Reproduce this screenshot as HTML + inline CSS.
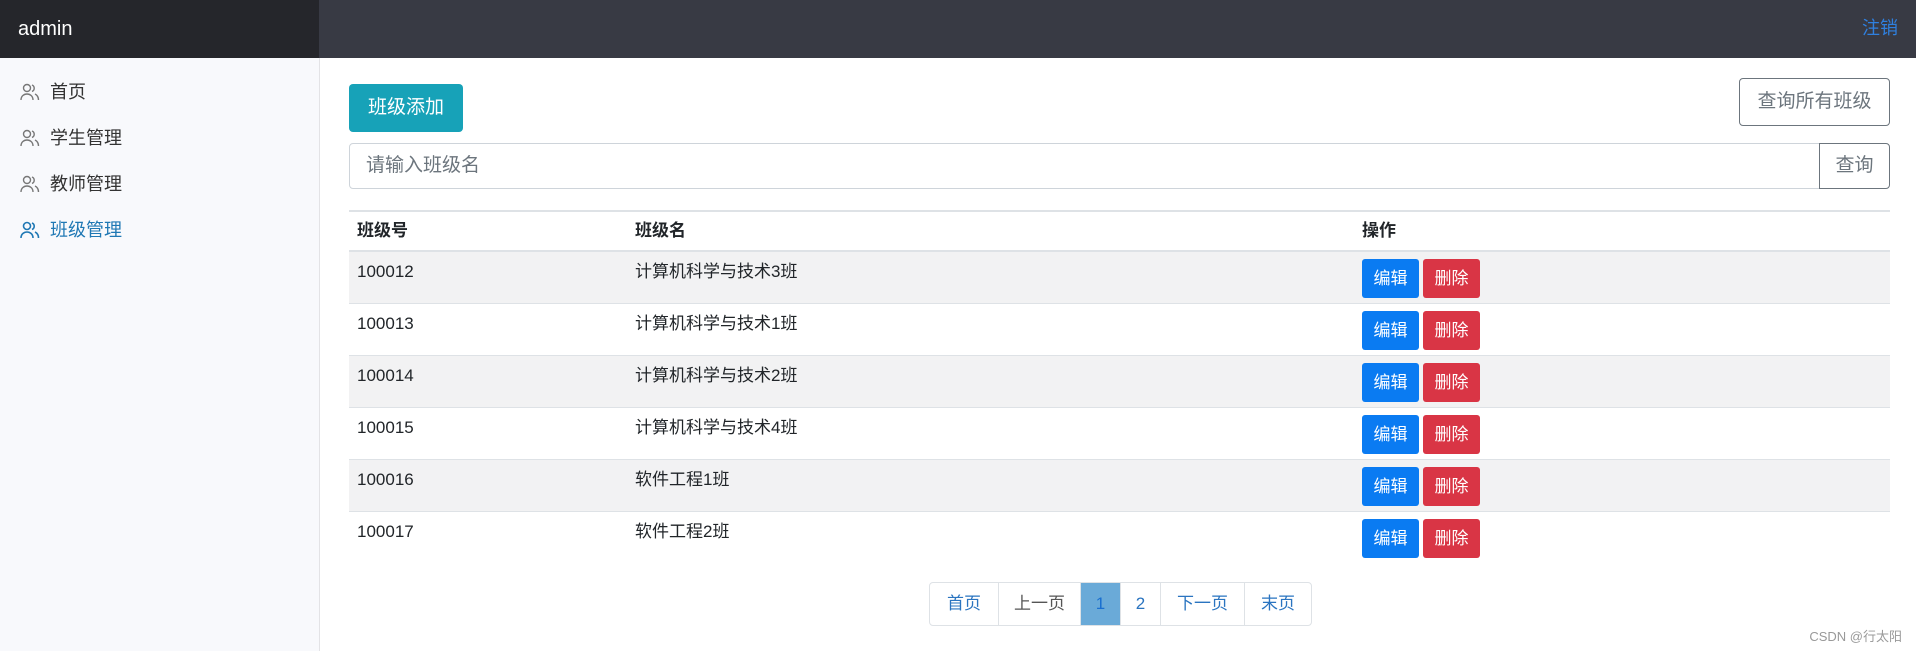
<!DOCTYPE html>
<html><head><meta charset="utf-8"><style>
*{box-sizing:border-box;margin:0;padding:0}
body{width:1916px;height:651px;overflow:hidden;background:#fff;font-family:"Liberation Sans","Noto Sans CJK SC",sans-serif;color:#212529;position:relative}
.hd{position:absolute;left:0;top:0;width:1916px;height:58px;background:#383a44}
.hd .l{position:absolute;left:0;top:0;width:319px;height:58px;background:#25262b;color:#fff;font-size:20px;line-height:58px;padding-left:18px}
.hd .r{position:absolute;right:18px;top:0;line-height:56px;color:#2f80e0;font-size:18px}
.sb{position:absolute;left:0;top:58px;width:320px;height:593px;background:#f8f9fc;border-right:1px solid #e3e3e6}
.it{position:absolute;left:20px;font-size:18px;color:#333;height:24px;line-height:24px}
.it svg{position:absolute;left:0;top:3px}
.it span{position:absolute;left:30px;white-space:nowrap}
.abs{position:absolute}
.btn{position:absolute;border-radius:4px;text-align:center;color:#fff}
table{position:absolute;left:349px;top:210px;width:1541px;border-collapse:collapse;font-size:17px}
th{text-align:left;font-weight:bold;height:40px;border-top:2px solid #dee2e6;border-bottom:2px solid #dee2e6;padding-left:8px;line-height:20px}
td{height:52px;border-top:1px solid #dee2e6;padding-left:8px;vertical-align:top;padding-top:10px;line-height:20px}
tr.s td{background:#f2f2f3}
td.b{padding-top:7px}
.e,.d{display:inline-block;width:57px;height:39px;line-height:39px;text-align:center;color:#fff;border-radius:3px;font-size:17px;vertical-align:top}
.e{background:#0a7bf2}.d{background:#d93545;margin-left:4px}
.pg{position:absolute;top:582px;left:929px;height:44px;border:1px solid #dee2e6;border-radius:4px;display:flex;font-size:17px;color:#2a74c0}
.pg div{line-height:42px;text-align:center;border-left:1px solid #dee2e6}
.pg div:first-child{border-left:none}
</style></head><body>
<div class="hd"><div class="l">admin</div><div class="r">注销</div></div>
<div class="sb">
<div class="it" style="top:22px"><svg width="20" height="18" viewBox="0 0 20 18" fill="none" stroke="#777" stroke-width="1.4"><circle cx="7" cy="5" r="3.5"/><path d="M1 17c0-4 3-6 6-6s6 2 6 6"/><path d="M12 2a3.5 3.5 0 0 1 0 6.5M15 11c2 1 3.5 3 3.5 6"/></svg><span>首页</span></div>
<div class="it" style="top:68px"><svg width="20" height="18" viewBox="0 0 20 18" fill="none" stroke="#777" stroke-width="1.4"><circle cx="7" cy="5" r="3.5"/><path d="M1 17c0-4 3-6 6-6s6 2 6 6"/><path d="M12 2a3.5 3.5 0 0 1 0 6.5M15 11c2 1 3.5 3 3.5 6"/></svg><span>学生管理</span></div>
<div class="it" style="top:114px"><svg width="20" height="18" viewBox="0 0 20 18" fill="none" stroke="#777" stroke-width="1.4"><circle cx="7" cy="5" r="3.5"/><path d="M1 17c0-4 3-6 6-6s6 2 6 6"/><path d="M12 2a3.5 3.5 0 0 1 0 6.5M15 11c2 1 3.5 3 3.5 6"/></svg><span>教师管理</span></div>
<div class="it" style="top:160px;color:#1f78b4"><svg width="20" height="18" viewBox="0 0 20 18" fill="none" stroke="#1f78b4" stroke-width="1.6"><circle cx="7" cy="5" r="3.5"/><path d="M1 17c0-4 3-6 6-6s6 2 6 6"/><path d="M12 2a3.5 3.5 0 0 1 0 6.5M15 11c2 1 3.5 3 3.5 6"/></svg><span>班级管理</span></div>
</div>
<div class="btn" style="left:349px;top:84px;width:114px;height:48px;line-height:48px;background:#17a2b8;font-size:19px">班级添加</div>
<div class="btn" style="left:1739px;top:78px;width:151px;height:48px;line-height:46px;border:1px solid #6c757d;color:#6c757d;font-size:19px">查询所有班级</div>
<div class="abs" style="left:349px;top:143px;width:1471px;height:46px;border:1px solid #ced4da;border-radius:4px 0 0 4px;font-size:19px;color:#6c757d;line-height:44px;padding-left:16px">请输入班级名</div>
<div class="abs" style="left:1819px;top:143px;width:71px;height:46px;border:1px solid #6c757d;border-radius:0 4px 4px 0;font-size:19px;color:#6c757d;line-height:44px;text-align:center">查询</div>
<table>
<tr><th style="width:278px">班级号</th><th style="width:727px">班级名</th><th>操作</th></tr>
<tr class="s"><td>100012</td><td>计算机科学与技术3班</td><td class="b"><span class="e">编辑</span><span class="d">删除</span></td></tr>
<tr><td>100013</td><td>计算机科学与技术1班</td><td class="b"><span class="e">编辑</span><span class="d">删除</span></td></tr>
<tr class="s"><td>100014</td><td>计算机科学与技术2班</td><td class="b"><span class="e">编辑</span><span class="d">删除</span></td></tr>
<tr><td>100015</td><td>计算机科学与技术4班</td><td class="b"><span class="e">编辑</span><span class="d">删除</span></td></tr>
<tr class="s"><td>100016</td><td>软件工程1班</td><td class="b"><span class="e">编辑</span><span class="d">删除</span></td></tr>
<tr><td>100017</td><td>软件工程2班</td><td class="b"><span class="e">编辑</span><span class="d">删除</span></td></tr>
</table>
<div class="pg">
<div style="width:68px">首页</div><div style="width:82px;color:#555">上一页</div><div style="width:40px;background:#6aaad8;color:#1a6fd0">1</div><div style="width:40px">2</div><div style="width:84px">下一页</div><div style="width:67px">末页</div>
</div>
<div class="abs" style="right:14px;top:626px;font-size:13px;color:#999">CSDN @行太阳</div>
</body></html>
